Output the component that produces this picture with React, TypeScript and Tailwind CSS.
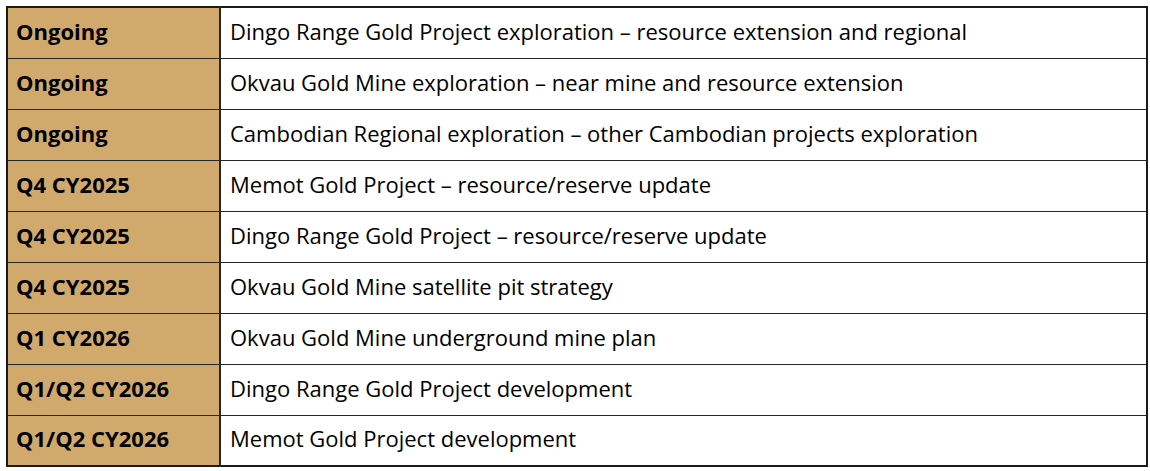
const rows: [string, string][] = [
  ['Ongoing', 'Dingo Range Gold Project exploration – resource extension and regional'],
  ['Ongoing', 'Okvau Gold Mine exploration – near mine and resource extension'],
  ['Ongoing', 'Cambodian Regional exploration – other Cambodian projects exploration'],
  ['Q4 CY2025', 'Memot Gold Project – resource/reserve update'],
  ['Q4 CY2025', 'Dingo Range Gold Project – resource/reserve update'],
  ['Q4 CY2025', 'Okvau Gold Mine satellite pit strategy'],
  ['Q1 CY2026', 'Okvau Gold Mine underground mine plan'],
  ['Q1/Q2 CY2026', 'Dingo Range Gold Project development'],
  ['Q1/Q2 CY2026', 'Memot Gold Project development'],
];

export default function App() {
  return (
    <div className="w-[1150px] h-[471px] bg-white pl-[6px] pt-[6px]" style={{ fontFamily: '"Open Sans", sans-serif' }}>
      <table className="w-[1142px] border-collapse border-2 border-[#1a1a1a] text-[22px] text-black">
        <tbody>
          {rows.map(([when, what], i) => (
            <tr key={i} className="h-[51px]">
              <td className="w-[213px] bg-[#d2a96d] border border-[#262626] border-r-2 pl-[8px] pb-[4px] font-bold leading-none">
                {when}
              </td>
              <td className="border border-[#262626] pl-[9px] pb-[4px] leading-none">{what}</td>
            </tr>
          ))}
        </tbody>
      </table>
    </div>
  );
}
